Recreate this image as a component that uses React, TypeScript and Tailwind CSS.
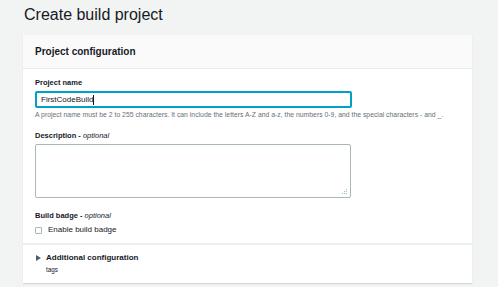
export default function App() {
  return (
    <div className="min-h-[287px] w-[498px] bg-[#f2f3f3] pl-[23px] pt-[7px] font-['Liberation_Sans',Arial,sans-serif] text-[#16191f]">
      <h1 className="text-[16px] leading-4 mb-[12px] pl-px">Create build project</h1>

      <div className="w-[449px] bg-white shadow-[0_1px_1px_rgba(0,28,36,0.12)]">
        <div className="h-[34px] flex items-center px-3 bg-[#fafafa] border-b border-[#eaeded]">
          <h2 className="text-[10px] font-bold leading-3 mt-[1px]">Project configuration</h2>
        </div>

        <div className="px-3 pt-[9px] pb-[8px]">
          <label className="block text-[7.5px] font-bold leading-[10px]">Project name</label>
          <div className="mt-[3px] w-[317px] h-[17px] border-2 border-[#00a1c9] rounded-[2px] flex items-center pl-1">
            <span className="text-[8px] leading-[10px] text-[#16191f]">FirstCodeBuild</span>
            <span className="w-px h-[10px] bg-[#16191f]" />
          </div>
          <p className="mt-[3px] text-[6.85px] leading-[8px] text-[#687078] whitespace-nowrap">
            A project name must be 2 to 255 characters. It can include the letters A-Z and a-z, the numbers 0-9, and the special characters - and _.
          </p>

          <label className="block mt-[12px] text-[7.5px] font-bold leading-[10px]">
            Description - <i className="font-normal">optional</i>
          </label>
          <div className="relative mt-[3px] w-[316px] h-[54px] border border-[#aab7b8] rounded-[2px] bg-white">
            <svg className="absolute right-[2px] bottom-[2px]" width="6" height="6" viewBox="0 0 6 6">
              <rect x="4" y="0" width="1" height="1" fill="#aab7b8" />
              <rect x="2" y="2" width="1" height="1" fill="#aab7b8" />
              <rect x="4" y="2" width="1" height="1" fill="#aab7b8" />
              <rect x="0" y="4" width="1" height="1" fill="#aab7b8" />
              <rect x="2" y="4" width="1" height="1" fill="#aab7b8" />
              <rect x="4" y="4" width="1" height="1" fill="#aab7b8" />
            </svg>
          </div>

          <label className="block mt-[13px] text-[7.5px] font-bold leading-[10px]">
            Build badge - <i className="font-normal">optional</i>
          </label>
          <div className="mt-[4px] flex items-center h-[10px]">
            <span className="w-[7px] h-[7px] border border-[#aab7b8] rounded-[1px] bg-white" />
            <span className="ml-[6px] text-[8px] leading-[10px] text-[#16191f]">Enable build badge</span>
          </div>
        </div>

        <div className="border-t-2 border-[#eef0f0] h-[40px] px-3 pt-[8px]">
          <div className="flex items-center h-[10px]">
            <svg width="5" height="6" viewBox="0 0 5 6" className="ml-[1px]">
              <path d="M0 0 L5 3 L0 6 Z" fill="#545b64" />
            </svg>
            <span className="ml-[5px] text-[8px] font-bold leading-[10px]">Additional configuration</span>
          </div>
          <p className="ml-[11px] mt-[3px] text-[6.3px] leading-[8px] text-[#16191f]">tags</p>
        </div>
      </div>
    </div>
  );
}
